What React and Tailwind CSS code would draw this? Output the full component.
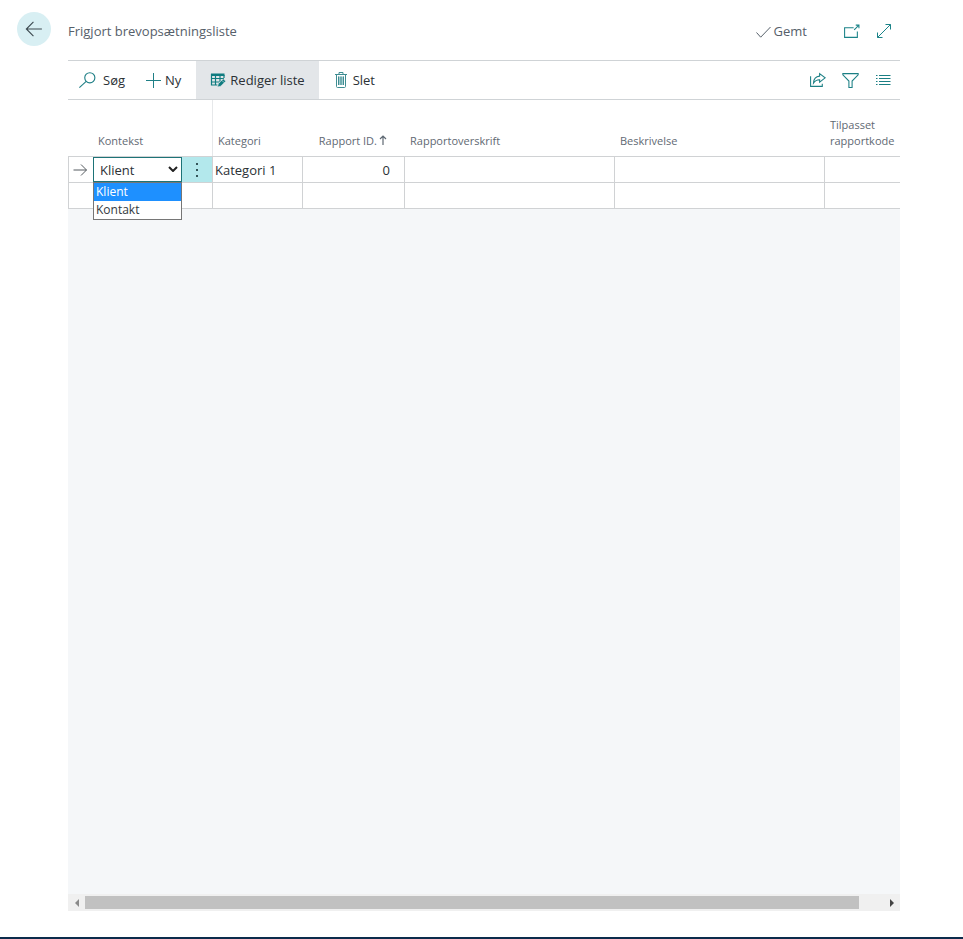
import React, { useState } from "react";

const contexts = ["Klient", "Kontakt"];

const columns = [
  { id: "category", label: "Kategori", width: "w-[90px]", align: "text-left" },
  { id: "reportId", label: "Rapport ID.", width: "w-[102px]", align: "text-right", sorted: true },
  { id: "caption", label: "Rapportoverskrift", width: "w-[210px]", align: "text-left" },
  { id: "description", label: "Beskrivelse", width: "w-[210px]", align: "text-left" },
  { id: "layoutCode", label: "Tilpasset rapportkode", width: "w-[90px]", align: "text-left" },
];

const rows = [
  { id: 1, active: true, category: "Kategori 1", reportId: 0 },
  { id: 2, active: false },
];

const Icon = ({ children, className = "size-4" }) => (
  <svg
    viewBox="0 0 16 16"
    fill="none"
    stroke="currentColor"
    strokeWidth="1"
    aria-hidden="true"
    className={"shrink-0 " + className}
  >
    {children}
  </svg>
);

const SearchIcon = () => (
  <Icon className="size-[18px] text-[#1f7f86]">
    <circle cx="10.5" cy="6" r="4.5" />
    <path d="M7.3 9.200 1.200 14.800" />
  </Icon>
);

const PlusIcon = () => (
  <Icon className="size-4 text-[#1f7f86]">
    <path d="M8.5 1v15M1 8.5h15" />
  </Icon>
);

const EditListIcon = () => (
  <Icon className="size-4 text-[#0f7c80]">
    <path d="M1 1.5h13.500v2.500H1z" fill="currentColor" stroke="none" />
    <path d="M1.5 2v11.500M5.500 3v10.500M10 3v7M14 3v3M1 6.500h13M1 10h8M1 13h6.500" strokeWidth="1.2" />
    <path d="m7.500 15 .8-3.200 5-5 2.400 2.400-5 5z" fill="currentColor" stroke="#e3e6e9" strokeWidth="0.6" />
    <path d="m11.800 8.300 2.300 2.300" stroke="#e3e6e9" strokeWidth="0.7" />
  </Icon>
);

const TrashIcon = () => (
  <Icon className="size-4 text-[#3f8d92]">
    <path d="M5 4.500h6v8.500H5z" fill="#a5cdd0" stroke="none" />
    <path d="M2 2.500h12M6 2.500v-2h4v2M3.500 2.500v12c0 .6.4 1 1 1h7c.6 0 1-.4 1-1v-12" />
    <path d="M5.500 4.500V13M8 4.500V13M10.500 4.500V13" />
  </Icon>
);

const RowArrow = ({ className }) => (
  <Icon className={className}>
    <path d="M1.500 8h13M9 2.500 14.500 8 9 13.500" />
  </Icon>
);

const App = () => {
  const [context, setContext] = useState("Klient");
  const [editing, setEditing] = useState(true);

  return (
    <div className="flex min-h-screen flex-col border-b-2 border-[#0c2b4b] bg-white font-['Open_Sans','Noto_Sans',sans-serif] text-[13px] text-[#2b3136]">
      <header className="flex h-[60px] items-center pr-[71px] pl-[17px]">
        <button
          type="button"
          aria-label="Tilbage"
          className="mb-0.5 flex size-[34px] items-center justify-center rounded-full bg-[#d8eff3] text-[#3d4a50]"
        >
          <Icon className="size-[18px]">
            <path d="M15 8H1.200M7.500 1.700 1.200 8l6.300 6.300" />
          </Icon>
        </button>
        <h1 className="ml-[17px] flex-1 pt-[3px] text-[#56606a]">Frigjort brevopsætningsliste</h1>
        <span className="flex items-center gap-0.5 pt-[3px] text-[#56606a]">
          <Icon>
            <path d="m.5 8.500 4.200 4.700L14.500 3" />
          </Icon>
          Gemt
        </span>
        <div className="ml-9 flex items-center gap-4 pt-0.5 text-[#1b8388]">
          <button type="button" aria-label="Åbn i nyt vindue">
            <Icon className="size-[17px]">
              <path d="M10 4.500H1.500v9H13.500V8" />
              <path d="M10.500 6.500 15 2M12 2h3v3" />
            </Icon>
          </button>
          <button type="button" aria-label="Udvid siden">
            <Icon className="size-4">
              <path d="M1.500 14.500 14.500 1.500M9.500 1.500h5v5M6.500 14.500h-5v-5" />
            </Icon>
          </button>
        </div>
      </header>

      <main className="mr-[63px] mb-[26px] ml-[68px] flex flex-1 flex-col">
        <div className="flex h-10 items-stretch border-y border-[#cfd3d6]">
          <button type="button" className="flex items-center gap-[7px] pr-3 pl-2.5">
            <SearchIcon />
            <span className="pt-0.5">Søg</span>
          </button>
          <button type="button" className="flex items-center gap-1 pr-[15px] pl-2">
            <PlusIcon />
            <span className="pt-0.5">Ny</span>
          </button>
          <button
            type="button"
            aria-pressed={editing}
            onClick={() => setEditing(!editing)}
            className={"flex items-center gap-1 px-3.5 " + (editing ? "bg-[#e3e6e9]" : "bg-white")}
          >
            <EditListIcon />
            <span className="pt-0.5">Rediger liste</span>
          </button>
          <button type="button" className="flex items-center gap-1 px-3.5">
            <TrashIcon />
            <span className="pt-0.5">Slet</span>
          </button>
          <div className="mr-[9px] ml-auto flex items-center gap-4 text-[#1b7f84]">
            <button type="button" aria-label="Del">
              <Icon className="size-[17px]">
                <path d="M1.500 4v9.500h11V11" />
                <path d="M10 1.500 15.200 5.500 10 9.500V7.300C7.500 7.200 5.700 8.200 4.200 10.500c.2-3.600 2.300-6.300 5.800-6.600z" />
              </Icon>
            </button>
            <button type="button" aria-label="Filter">
              <Icon className="size-[17px]">
                <path d="M.8 1.500h14.400v1.200L9.500 8.500v6h-3v-6L.8 2.700z" />
              </Icon>
            </button>
            <button type="button" aria-label="Vis som liste">
              <Icon className="size-4">
                <path d="M4 3.500h11.500M4 6.500h11.500M4 9.500h11.500M4 12.500h11.500M1 3.500h1.500M1 6.500h1.500M1 9.500h1.500M1 12.500h1.500" strokeWidth="1.2" />
              </Icon>
            </button>
          </div>
        </div>

        <div className="flex-1 overflow-hidden bg-[#f5f7f9]">
          <table className="w-full table-fixed border-separate border-spacing-0 bg-white">
            <thead>
              <tr className="h-14 align-bottom text-[11px] leading-4 text-[#5f6973]">
                <th className="w-[25px]" aria-label="Valgt række" />
                <th className="w-[89px] pb-[7px] pl-[5px] text-left font-normal">Kontekst</th>
                <th className="w-[30px]" aria-label="Handlinger" />
                {columns.map((col, i) => (
                  <th
                    key={col.id}
                    className={
                      "pb-[7px] font-normal " +
                      (i === columns.length - 1 ? "" : col.width) +
                      (i === 0 ? " border-l border-[#e6e8ea] pl-[5px] " : " pl-1.5 ") +
                      (col.sorted ? "pr-[17px] text-right whitespace-nowrap" : "text-left")
                    }
                  >
                    {col.label}
                    {col.sorted ? (
                      <svg
                        viewBox="0 0 8 10"
                        fill="none"
                        stroke="currentColor"
                        aria-label="Stigende"
                        className="ml-0.5 inline h-2.5 w-2 align-baseline"
                      >
                        <path d="M4 10V1M1 4l3-3 3 3" strokeWidth="1.2" />
                      </svg>
                    ) : null}
                  </th>
                ))}
              </tr>
            </thead>
            <tbody>
              {rows.map((row) => (
                <tr key={row.id} className="h-[26px] *:border-t *:border-[#d0d2d4] last:h-[27px] last:*:border-b">
                  <td className="border-l pl-[3px]">
                    {row.active ? <RowArrow className="size-4 text-[#555b60]" /> : null}
                  </td>
                  <td className={row.active ? "relative" : ""}>
                    {row.active ? (
                      <>
                        <select
                          aria-label="Kontekst"
                          value={context}
                          onChange={(e) => setContext(e.target.value)}
                          className="block h-[25px] w-full appearance-none border border-[#1d7377] bg-white pt-0.5 pl-1.5 outline-none"
                        >
                          {contexts.map((c) => (
                            <option key={c}>{c}</option>
                          ))}
                        </select>
                        <svg
                          viewBox="0 0 10 6"
                          fill="none"
                          stroke="#222"
                          strokeWidth="2"
                          aria-hidden="true"
                          className="pointer-events-none absolute top-[9px] right-1 h-1.5 w-2.5"
                        >
                          <path d="m1 1 4 4 4-4" />
                        </svg>
                        <ul
                          role="listbox"
                          aria-label="Kontekst"
                          className="absolute top-full left-0 z-10 w-full border border-[#767676] bg-white text-xs leading-[18px]"
                        >
                          {contexts.map((c) => (
                            <li
                              key={c}
                              role="option"
                              aria-selected={c === context}
                              onClick={() => setContext(c)}
                              className={"pl-0.5 " + (c === context ? "bg-[#1e90ff] text-white" : "text-[#333a40]")}
                            >
                              {c}
                            </li>
                          ))}
                        </ul>
                      </>
                    ) : null}
                  </td>
                  <td className={row.active ? "bg-[#b3e8ec]" : ""}>
                    {row.active ? (
                      <button type="button" aria-label="Vis flere indstillinger" className="flex h-[25px] w-full items-center justify-center">
                        <svg viewBox="0 0 2 14" fill="#33555a" aria-hidden="true" className="h-3.5 w-0.5">
                          <path d="M0 0h2v2H0zM0 6h2v2H0zM0 12h2v2H0z" />
                        </svg>
                      </button>
                    ) : null}
                  </td>
                  {columns.map((col) => (
                    <td
                      key={col.id}
                      className={"border-l pl-0.5 leading-5 " + col.align + (col.sorted ? " pr-3.5" : "")}
                    >
                      {row[col.id]}
                    </td>
                  ))}
                </tr>
              ))}
            </tbody>
          </table>
        </div>

        <div className="flex h-[17px] items-center bg-[#f0f0f0]">
          <button type="button" aria-label="Rul til venstre" className="flex w-[17px] justify-center">
            <svg viewBox="0 0 4 8" fill="#8b8b8b" className="h-2 w-1">
              <path d="M4 0v8L0 4z" />
            </svg>
          </button>
          <div className="flex flex-1">
            <div className="h-[13px] w-[97%] bg-[#c1c1c1]" />
          </div>
          <button type="button" aria-label="Rul til højre" className="flex w-[17px] justify-center">
            <svg viewBox="0 0 4 8" fill="#454545" className="h-2 w-1">
              <path d="M0 0v8l4-4z" />
            </svg>
          </button>
        </div>
      </main>
    </div>
  );
};

export default App;
